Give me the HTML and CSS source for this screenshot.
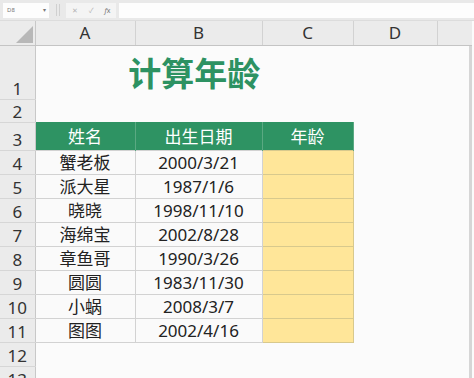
FILE: index.html
```html
<!DOCTYPE html>
<html lang="zh-CN">
<head>
    <meta charset="UTF-8">
    <title>计算年龄</title>
    <link rel="stylesheet" href="styles.css">
</head>
<body>
    <div class="toolbar">
        <div class="namebox"><span>D8</span><span class="caret">▾</span></div>
        <div class="grip"></div>
        <div class="fxbox">
            <span class="ico">✕</span><span class="ico">✓</span><span class="ico fx"><i>f</i>x</span>
        </div>
        <div class="formula"></div>
    </div>
    <div class="sheet">
        <table class="grid">
            <colgroup>
                <col class="c-head"><col class="c-a"><col class="c-b"><col class="c-c"><col class="c-d"><col>
            </colgroup>
            <tr class="r-colhead">
                <th class="corner"><div class="tri"></div></th>
                <th>A</th><th>B</th><th>C</th><th>D</th><th class="last"></th>
            </tr>
            <tr class="r-title">
                <th>1</th>
                <td colspan="3" class="title">计算年龄</td>
                <td></td><td></td>
            </tr>
            <tr class="r-gap">
                <th>2</th><td></td><td></td><td></td><td></td><td></td>
            </tr>
            <tr class="r-head">
                <th>3</th>
                <td class="hd">姓名</td><td class="hd">出生日期</td><td class="hd">年龄</td>
                <td></td><td></td>
            </tr>
            <tr class="r-data"><th>4</th><td class="dt">蟹老板</td><td class="dt">2000/3/21</td><td class="age"></td><td></td><td></td></tr>
            <tr class="r-data"><th>5</th><td class="dt">派大星</td><td class="dt">1987/1/6</td><td class="age"></td><td></td><td></td></tr>
            <tr class="r-data"><th>6</th><td class="dt">晓晓</td><td class="dt">1998/11/10</td><td class="age"></td><td></td><td></td></tr>
            <tr class="r-data"><th>7</th><td class="dt">海绵宝</td><td class="dt">2002/8/28</td><td class="age"></td><td></td><td></td></tr>
            <tr class="r-data"><th>8</th><td class="dt">章鱼哥</td><td class="dt">1990/3/26</td><td class="age"></td><td></td><td></td></tr>
            <tr class="r-data"><th>9</th><td class="dt">圆圆</td><td class="dt">1983/11/30</td><td class="age"></td><td></td><td></td></tr>
            <tr class="r-data"><th>10</th><td class="dt">小蜗</td><td class="dt">2008/3/7</td><td class="age"></td><td></td><td></td></tr>
            <tr class="r-data"><th>11</th><td class="dt">图图</td><td class="dt">2002/4/16</td><td class="age"></td><td></td><td></td></tr>
            <tr class="r-data"><th>12</th><td></td><td></td><td></td><td></td><td></td></tr>
            <tr class="r-data"><th>13</th><td></td><td></td><td></td><td></td><td></td></tr>
        </table>
    </div>
</body>
</html>
```

FILE: styles.css
```css
* {
    box-sizing: border-box;
}
html, body {
    margin: 0;
    height: 100%;
    overflow: hidden;
}
body {
    font-family: "Noto Sans", "Noto Sans CJK SC", sans-serif;
    color: #222;
    background: #fbfbfb;
}
.toolbar {
    display: flex;
    align-items: center;
    height: 21px;
    padding: 0 0 0 3px;
    background: #e9e9e9;
    border-bottom: 1px solid #dcdcdc;
}
.namebox {
    display: flex;
    justify-content: space-between;
    align-items: center;
    width: 46px;
    height: 15px;
    padding: 0 3px 0 4px;
    background: #fdfdfd;
    font-size: 6px;
    color: #777;
}
.caret {
    font-size: 6px;
}
.grip {
    width: 4px;
    height: 12px;
    margin: 0 6px 0 7px;
    border-left: 1px solid #d0d0d0;
    border-right: 1px solid #d0d0d0;
}
.fxbox {
    display: flex;
    justify-content: space-around;
    align-items: center;
    width: 50px;
    height: 15px;
    background: #f4f4f4;
    font-size: 7px;
    color: #b5b5b5;
}
.fxbox .fx {
    color: #777;
}
.formula {
    flex: 1;
    height: 15px;
    margin-left: 3px;
    background: #fdfdfd;
}
.sheet {
    border-right: 3px solid #d6d6d6;
    width: 472px;
    height: 357px;
}
.grid {
    border-collapse: collapse;
    table-layout: fixed;
    width: 472px;
}
.c-head { width: 35px; }
.c-a { width: 100px; }
.c-b { width: 127px; }
.c-c { width: 91px; }
.c-d { width: 84px; }
.grid th {
    padding: 0;
    font-weight: normal;
    font-size: 17px;
    color: #333;
    background: #ebebeb;
}
.grid td {
    padding: 0;
}
.r-colhead {
    height: 24px;
}
.r-colhead th {
    border-right: 1px solid #d2d2d2;
    border-bottom: 1px solid #c4c4c4;
    vertical-align: middle;
    line-height: 20px;
}
.r-colhead th.last {
    border-right: none;
}
.corner {
    position: relative;
}
.tri {
    position: absolute;
    right: 2px;
    bottom: 2px;
    width: 0;
    height: 0;
    border-left: 17px solid transparent;
    border-bottom: 17px solid #b8b8b8;
}
tr > th:first-child {
    text-align: center;
    vertical-align: bottom;
    line-height: 21px;
    border-right: 1px solid #c8c8c8;
    border-bottom: 1px solid #d6d6d6;
}
.r-colhead > th:first-child {
    border-bottom: 1px solid #c4c4c4;
}
.r-title { height: 54px; }
.r-gap { height: 23px; }
.r-head { height: 28px; }
.r-data { height: 24px; }
.title {
    text-align: center;
    vertical-align: middle;
    font-family: "Noto Sans CJK SC", sans-serif;
    font-size: 33px;
    font-weight: bold;
    color: #2d9262;
    padding-top: 2px;
}
.hd {
    background: #2e9363;
    color: #fff;
    text-align: center;
    font-size: 17px;
    border-left: 1px solid #5aa982;
    border-right: 1px solid #5aa982;
}
.dt {
    text-align: center;
    vertical-align: bottom;
    font-size: 17px;
    line-height: 22px;
    border: 1px solid #d2d2d2;
    background: #fafafa;
}
.age {
    background: #ffe699;
    border: 1px solid #d8c98d;
}
```
